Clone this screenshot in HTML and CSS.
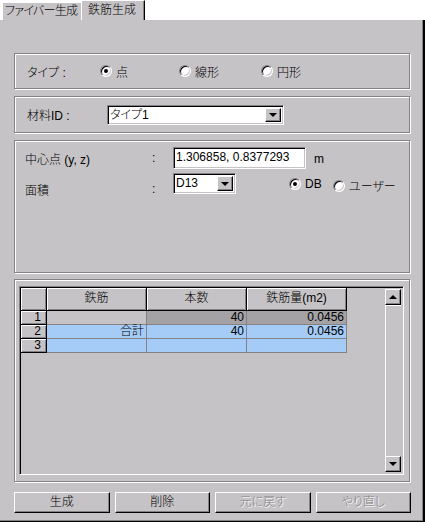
FILE: index.html
```html
<!DOCTYPE html>
<html lang="ja">
<head>
<meta charset="utf-8">
<link rel="stylesheet" href="styles.css">
</head>
<body>
<div class="tabs">
  <div class="tab">ファイバー生成</div>
  <div class="tab active">鉄筋生成</div>
</div>
<div class="panel">
  <div class="group g-type">
    <span class="lbl-type">タイプ :</span>
    <span class="opt o1"><span class="radio on"></span>点</span>
    <span class="opt o2"><span class="radio"></span>線形</span>
    <span class="opt o3"><span class="radio"></span>円形</span>
  </div>
  <div class="group g-mat">
    <span class="lbl-mat">材料ID :</span>
    <div class="combo combo-mat"><span class="combo-text">タイプ1</span><span class="combo-btn"><span class="tri"></span></span></div>
  </div>
  <div class="group g-geo">
    <div class="geo-row r1">
      <span class="geo-lbl">中心点 (y, z)</span>
      <span class="geo-colon">:</span>
      <div class="field">1.306858, 0.8377293</div>
      <span class="unit">m</span>
    </div>
    <div class="geo-row r2">
      <span class="geo-lbl">面積</span>
      <span class="geo-colon">:</span>
      <div class="combo combo-area"><span class="combo-text">D13</span><span class="combo-btn"><span class="tri"></span></span></div>
      <span class="opt o-db"><span class="radio on"></span>DB</span>
      <span class="opt o-user"><span class="radio"></span>ユーザー</span>
    </div>
  </div>
  <div class="group g-table">
    <div class="grid-box">
      <div class="grid">
        <div class="row head">
          <div class="c rh hd"></div>
          <div class="c col hd">鉄筋</div>
          <div class="c col hd">本数</div>
          <div class="c col hd">鉄筋量(m2)</div>
        </div>
        <div class="row">
          <div class="c rh">1</div>
          <div class="c col plain"></div>
          <div class="c col dark">40</div>
          <div class="c col dark">0.0456</div>
        </div>
        <div class="row">
          <div class="c rh">2</div>
          <div class="c col blue">合計</div>
          <div class="c col blue">40</div>
          <div class="c col blue">0.0456</div>
        </div>
        <div class="row">
          <div class="c rh">3</div>
          <div class="c col blue"></div>
          <div class="c col blue"></div>
          <div class="c col blue"></div>
        </div>
      </div>
      <div class="vscroll">
        <div class="sbtn"><span class="tri up"></span></div>
        <div class="strack"></div>
        <div class="sbtn"><span class="tri"></span></div>
      </div>
    </div>
  </div>
  <div class="buttons">
    <div class="btn">生成</div>
    <div class="btn">削除</div>
    <div class="btn disabled">元に戻す</div>
    <div class="btn disabled">やり直し</div>
  </div>
</div>
</body>
</html>
```
FILE: styles.css
```css
* { box-sizing: border-box; }
html, body { margin: 0; padding: 0; background: #ffffff; }
body {
  width: 425px;
  height: 524px;
  font-family: "Liberation Sans", "Noto Sans CJK JP", sans-serif;
  font-size: 12px;
  font-weight: 300;
  font-feature-settings: "palt";
  color: #000;
  overflow: hidden;
}
.tabs {
  height: 20px;
  display: flex;
  align-items: flex-end;
  padding-left: 2px;
}
.tab {
  height: 18px;
  width: 79px;
  background: #c6c3c6;
  border-top: 1px solid #ffffff;
  border-left: 1px solid #ffffff;
  padding-left: 2px;
  line-height: 16px;
  white-space: nowrap;
  letter-spacing: -0.7px;
}
.tab.active {
  height: 20px;
  width: 64px;
  border-right: 1px solid #000;
  box-shadow: inset -1px 0 0 #848284;
  padding-left: 6px;
  line-height: 18px;
  letter-spacing: 0;
}
.panel {
  height: 502px;
  background: #c6c3c6;
  border-right: 2px solid #000;
  border-bottom: 1px solid #000;
  box-shadow: inset -1px -1px 0 #848284;
  padding: 33px 13px 0 14px;
  display: flex;
  flex-direction: column;
}
.group {
  border: 1px solid #848284;
  box-shadow: inset 1px 1px 0 #ffffff, 1px 1px 0 #ffffff;
  width: 396px;
  position: relative;
}
.g-type { height: 36px; margin-bottom: 7px; display: flex; align-items: center; }
.g-mat { height: 37px; margin-bottom: 7px; display: flex; align-items: center; }
.g-geo { height: 133px; margin-bottom: 6px; padding: 6px 0 0 10px; }
.g-table { height: 203px; padding: 6px 0 0 4px; }
.lbl-type { margin-left: 12px; width: 73px; }
.lbl-mat { margin-left: 12px; width: 80px; }
.opt { display: inline-flex; align-items: center; gap: 4px; }
.o1 { width: 79px; }
.o2 { width: 82px; }
.radio {
  width: 12px; height: 12px;
  border-radius: 50%;
  background: #fff;
  border: 1px solid;
  border-color: #848284 #ffffff #ffffff #848284;
  box-shadow: inset 1px 1px 0 #000, inset -1px -1px 0 #c6c3c6;
  display: inline-flex;
  align-items: center;
  justify-content: center;
  flex: none;
}
.radio.on::after {
  content: "";
  width: 4px; height: 4px;
  border-radius: 50%;
  background: #000;
}
.combo {
  display: flex;
  background: #fff;
  border: 1px solid;
  border-color: #848284 #ffffff #ffffff #848284;
  box-shadow: inset 1px 1px 0 #000, inset -1px -1px 0 #c6c3c6;
  padding: 2px;
  align-items: stretch;
}
.combo-mat { width: 177px; height: 20px; }
.combo-area { width: 63px; height: 21px; }
.combo-text { flex: 1; line-height: 14px; white-space: nowrap; }
.combo-btn, .sbtn {
  width: 16px;
  background: #c6c3c6;
  border: 1px solid;
  border-color: #ffffff #000 #000 #ffffff;
  box-shadow: inset -1px -1px 0 #848284;
  display: flex;
  align-items: center;
  justify-content: center;
}
.tri {
  width: 0; height: 0;
  border-left: 4px solid transparent;
  border-right: 4px solid transparent;
  border-top: 4px solid #000;
}
.tri.up { border-top: 0; border-bottom: 4px solid #000; }
.geo-row { display: flex; align-items: center; }
.r1 { height: 22px; }
.r2 { height: 21px; margin-top: 4px; align-items: flex-start; }
.geo-lbl { width: 127px; }
.r2 .geo-lbl { margin-top: 8px; }
.geo-colon { width: 21px; }
.r2 .geo-colon { margin-top: 9px; }
.field {
  width: 133px; height: 22px;
  background: #fff;
  border: 1px solid;
  border-color: #848284 #ffffff #ffffff #848284;
  box-shadow: inset 1px 1px 0 #000, inset -1px -1px 0 #c6c3c6;
  padding: 2px 0 0 2px;
  line-height: 15px;
  white-space: nowrap;
}
.unit { margin-left: 8px; margin-top: 2px; }
.o-db { margin-left: 53px; margin-top: 4px; width: 44px; }
.o-user { margin-top: 4px; }
.grid-box {
  width: 385px; height: 189px;
  border: 1px solid;
  border-color: #848284 #ffffff #ffffff #848284;
  box-shadow: inset 1px 1px 0 #000, inset -1px -1px 0 #c6c3c6;
  padding: 1px 2px 2px 1px;
  display: flex;
  justify-content: space-between;
}
.grid { display: flex; flex-direction: column; }
.row { display: flex; }
.c {
  height: 14px;
  border-right: 1px solid #848284;
  border-bottom: 1px solid #848284;
  line-height: 13px;
  padding: 0 2px;
  text-align: right;
  white-space: nowrap;
}
.head .c { height: 23px; }
.rh {
  width: 26px;
  background: #c6c3c6;
  border-color: #000;
  box-shadow: inset 1px 1px 0 #fff, inset -1px -1px 0 #848284;
  padding-right: 5px;
}
.col { width: 100px; }
.hd {
  background: #c6c3c6;
  border-right: 1px solid #000;
  border-bottom: 1px solid #000;
  box-shadow: inset 1px 1px 0 #fff, inset -1px -1px 0 #848284;
  text-align: center;
  line-height: 21px;
}
.plain { background: #c6c3c6; }
.dark { background: #a5a2a5; }
.blue { background: #a5cbf7; }
.vscroll {
  width: 16px;
  display: flex;
  flex-direction: column;
  margin-top: 1px;
}
.sbtn { height: 16px; flex: none; }
.strack {
  flex: 1;
  background: #c6c3c6;
  border-left: 1px solid #fff;
  border-top: 1px solid #fff;
}
.buttons {
  display: flex;
  gap: 5px;
  margin-top: 10px;
  width: 397px;
}
.btn {
  flex: 1;
  height: 21px;
  background: #c6c3c6;
  border: 1px solid;
  border-color: #ffffff #000 #000 #ffffff;
  box-shadow: inset -1px -1px 0 #848284;
  text-align: center;
  line-height: 18px;
}
.btn.disabled {
  color: #848284;
  text-shadow: 1px 1px 0 #fff;
}
```
